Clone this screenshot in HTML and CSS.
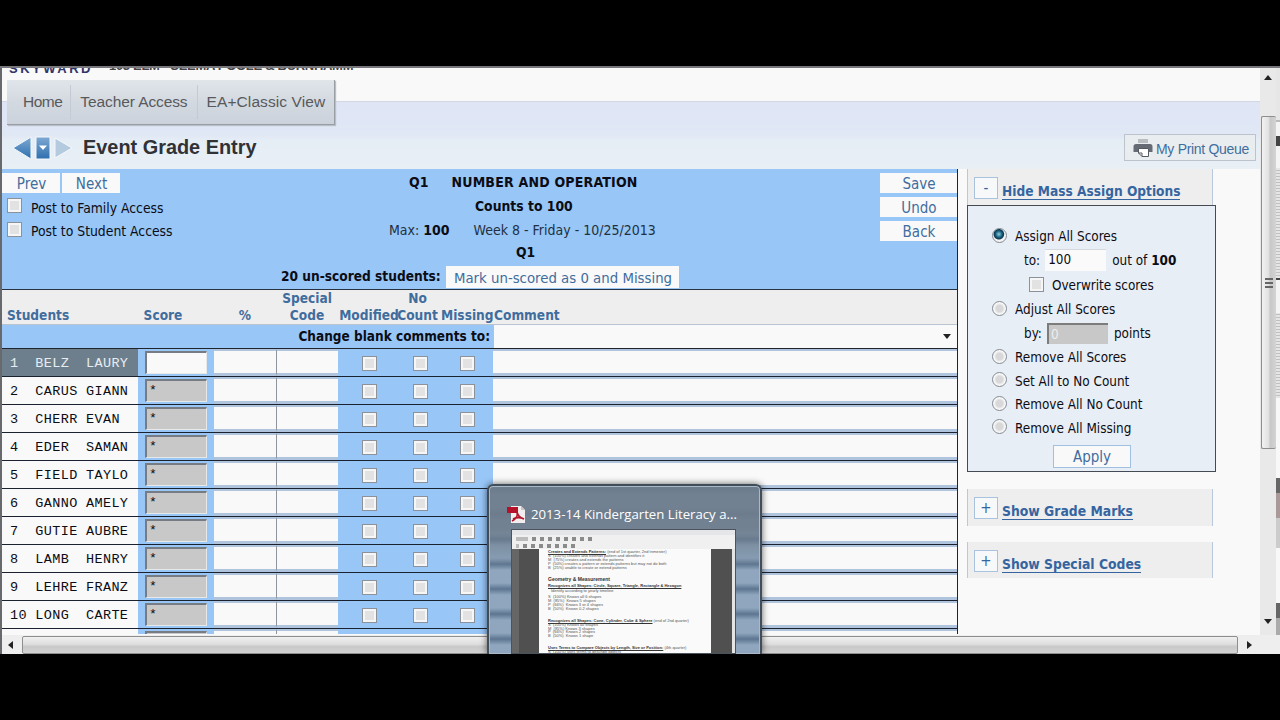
FILE: index.html
```html
<!DOCTYPE html>
<html lang="en">
<head>
    <meta charset="UTF-8">
    <title>Event Grade Entry</title>
    <link rel="stylesheet" href="styles.css">
</head>
<body>
    <div class="screen">
        <div class="app">
            <div class="page">
                <div class="topbar">
                    <span class="logo">SKYWARD</span>
                    <span class="school">103 ELM - SEEMA POOLE &amp; BURNHAMM</span>
                </div>
                <div class="header">
                    <div class="nav">
                        <a>Home</a>
                        <a>Teacher Access</a>
                        <a>EA+Classic View</a>
                    </div>
                    <div class="title-row">
                        <svg class="arrows" width="60" height="24" viewBox="0 0 60 24">
                            <defs>
                                <linearGradient id="blue" x1="0" y1="0" x2="0" y2="1">
                                    <stop offset="0" stop-color="#7fa9d3"/>
                                    <stop offset="1" stop-color="#2d6fae"/>
                                </linearGradient>
                            </defs>
                            <path d="M0 12 18 1V23Z" fill="url(#blue)" stroke="#f4f8fb"/>
                            <rect x="23" y="1" width="14" height="22" fill="url(#blue)" stroke="#f4f8fb"/>
                            <path d="M26 9.500h8l-4 4.500z" fill="#fff"/>
                            <path d="M59 12 42 2V22Z" fill="#b4cade" stroke="#f4f8fb"/>
                        </svg>
                        <h1>Event Grade Entry</h1>
                        <button class="print">
                            <svg width="20" height="20" viewBox="0 0 20 20">
                                <path d="M5 1h10v4H5z" fill="#b9bcc1"/>
                                <path d="M3 6h14q2.500 0 2.500 2.500V14H15v-3H5v3H.5V8.500Q.5 6 3 6z" fill="#666b73"/>
                                <path d="M5.500 10.500h10V18.500H9L5.500 15z" fill="#fff" stroke="#555a62"/>
                                <path d="M5.500 15H9v3.500" fill="none" stroke="#555a62"/>
                            </svg>
                            <span>My Print Queue</span>
                        </button>
                    </div>
                </div>

                <div class="content">
                    <div class="grades">
                        <div class="event">
                            <div class="event-left">
                                <div class="pager"><button>Prev</button><button>Next</button></div>
                                <label><i class="check"></i><span>Post to Family Access</span></label>
                                <label><i class="check"></i><span>Post to Student Access</span></label>
                            </div>
                            <div class="event-info">
                                <div class="line1"><b>Q1</b><b class="subject">NUMBER AND OPERATION</b></div>
                                <div class="line2"><b>Counts to 100</b></div>
                                <div class="line3"><span>Max: <b>100</b></span><span class="date">Week 8 - Friday - 10/25/2013</span></div>
                                <div class="line4"><b>Q1</b></div>
                                <div class="line5"><b>20 un-scored students:</b><button>Mark un-scored as 0 and Missing</button></div>
                            </div>
                            <div class="event-right">
                                <button>Save</button>
                                <button>Undo</button>
                                <button>Back</button>
                            </div>
                        </div>
                        <div class="cols head">
                            <span class="left">Students</span>
                            <span class="h-score">Score</span>
                            <span>%</span>
                            <span>Special<br>Code</span>
                            <span class="h-mod">Modified</span>
                            <span class="h-count">No<br>Count</span>
                            <span class="h-miss">Missing</span>
                            <span class="left">Comment</span>
                        </div>
                        <div class="blank">
                            <b>Change blank comments to:</b>
                            <div class="combo"><i class="tri down"></i></div>
                        </div>
                        <div id="rows"></div>
                    </div>

                    <div class="side">
                        <div class="panel-head open"><i class="toggle">-</i><a>Hide Mass Assign Options</a></div>
                        <div class="options">
                            <div class="opt"><i class="radio on"></i><span>Assign All Scores</span></div>
                            <div class="opt value"><span>to:</span><i class="input">100</i><span>out of <b>100</b></span></div>
                            <div class="opt over"><i class="check"></i><span>Overwrite scores</span></div>
                            <div class="opt"><i class="radio"></i><span>Adjust All Scores</span></div>
                            <div class="opt value"><span>by:</span><i class="input off">0</i><span>points</span></div>
                            <div class="opt gap"><i class="radio"></i><span>Remove All Scores</span></div>
                            <div class="opt"><i class="radio"></i><span>Set All to No Count</span></div>
                            <div class="opt"><i class="radio"></i><span>Remove All No Count</span></div>
                            <div class="opt"><i class="radio"></i><span>Remove All Missing</span></div>
                            <button class="apply">Apply</button>
                        </div>
                        <div class="panel-head marks"><i class="toggle">+</i><a>Show Grade Marks</a></div>
                        <div class="panel-head codes"><i class="toggle">+</i><a>Show Special Codes</a></div>
                    </div>
                </div>
            </div>
            <div class="vscroll">
                <i class="tri up"></i>
                <div class="vthumb"><i></i><i></i><i></i></div>
                <i class="tri down"></i>
            </div>
            <div class="edge"></div>
            <div class="hscroll">
                <i class="tri prev"></i>
                <div class="hthumb"></div>
                <i class="tri next"></i>
            </div>
        </div>

        <div class="preview">
            <div class="preview-title">
                <svg width="19" height="19" viewBox="0 0 19 19">
                    <path d="M4 1h10l4 4v13H4z" fill="#f3eeee"/>
                    <path d="M14 1v4h4z" fill="#c9c4c4"/>
                    <path d="M0 2h11v6H0z" fill="#b3122a"/>
                    <path d="M10 7c1 4 3 6 7 7M10 7c1 4-1 7-5 9M6 14c4-2 7-2 11 0" fill="none" stroke="#b3122a" stroke-width="1.600"/>
                </svg>
                <span>2013-14 Kindergarten Literacy a...</span>
            </div>
            <div class="thumb">
                <div class="bar"></div>
                <div class="bar tools"><i></i><i></i><i></i><i></i><i></i><i></i><i></i><i></i><i></i></div>
                <div class="bar tools second"><i></i><i></i><i></i><i></i><i></i><i></i><i></i><i></i></div>
                <div class="doc">
                    <div class="paper">
                        <p><b><u>Creates and Extends Patterns:</u></b> (end of 1st quarter, 2nd trimester)</p>
                        <p>S &nbsp;(100%) creates and extends pattern and identifies it</p>
                        <p>M &nbsp;(75%) creates and extends the patterns</p>
                        <p>P &nbsp;(50%) creates a pattern or extends patterns but may not do both</p>
                        <p>B &nbsp;(25%) unable to create or extend patterns</p>
                        <h2>Geometry &amp; Measurement</h2>
                        <p><b><u>Recognizes all Shapes: Circle, Square, Triangle, Rectangle &amp; Hexagon</u></b></p>
                        <p class="sp">Identify according to yearly timeline</p>
                        <p>S &nbsp;(100%) Knows all 6 shapes</p>
                        <p>M &nbsp;(85%) &nbsp;Knows 5 shapes</p>
                        <p>P &nbsp;(66%) &nbsp;Knows 3 or 4 shapes</p>
                        <p>B &nbsp;(50%) &nbsp;Knows 0-2 shapes</p>
                        <p class="far"><b><u>Recognizes all Shapes: Cone, Cylinder, Cube &amp; Sphere</u></b> (end of 2nd quarter)</p>
                        <p>S &nbsp;(100%) Knows all shapes</p>
                        <p>M &nbsp;(85%) Knows 3 shapes</p>
                        <p>P &nbsp;(66%) &nbsp;Knows 2 shapes</p>
                        <p>B &nbsp;(50%) &nbsp;Knows 1 shape</p>
                        <p class="far"><b><u>Uses Terms to Compare Objects by Length, Size or Position:</u></b> (4th quarter)</p>
                        <p>S &nbsp;(100%) uses terms to describe objects</p>
                    </div>
                </div>
            </div>
        </div>
    </div>

    <script>
        const students = [
            ['BELZ', 'LAURY'], ['CARUS', 'GIANN'], ['CHERR', 'EVAN'], ['EDER', 'SAMAN'],
            ['FIELD', 'TAYLO'], ['GANNO', 'AMELY'], ['GUTIE', 'AUBRE'], ['LAMB', 'HENRY'],
            ['LEHRE', 'FRANZ'], ['LONG', 'CARTE'], ['', '']
        ];

        document.getElementById('rows').innerHTML = students.map(([last, first], i) => `
            <div class="cols row${i === 0 ? ' active' : ''}">
                <span class="name">${last ? String(i + 1).padEnd(3) + last.padEnd(6) + first : ''}</span>
                <span class="score">${i === 0 || !last ? '' : '*'}</span>
                <span class="cell"></span>
                <span class="cell code"></span>
                <span class="tick"><i class="check"></i></span>
                <span class="tick"><i class="check"></i></span>
                <span class="tick"><i class="check"></i></span>
                <span class="cell comment"></span>
            </div>`).join('');
    </script>
</body>
</html>
```
FILE: styles.css
```css
:root {
    --blue: #97c6f7;
    --link: #3f6d9e;
    --paper: #f9f9f9;
    --grey: #eeeeee;
}

* {
    box-sizing: border-box;
}

body {
    margin: 0;
    background: #000;
    font-family: "DejaVu Sans Condensed", "DejaVu Sans", sans-serif;
    font-stretch: condensed;
    font-size: 13.800px;
    color: #0c0c14;
}

i {
    font-style: normal;
}

button {
    font: inherit;
    font-size: 15px;
    color: var(--link);
    background: var(--paper);
    border: 0;
    padding: 0;
    white-space: nowrap;
}

.screen {
    position: relative;
    width: 1280px;
    height: 720px;
    padding-top: 66px;
    overflow: hidden;
}

.app {
    display: grid;
    grid-template-columns: 1260px 16px 4px;
    grid-template-rows: 567px 19px;
    height: 588px;
    border-top: 2px solid #77777b;
    background: var(--paper);
}

.page {
    border-left: 2px solid #68696d;
    overflow: hidden;
}

/* header */
.topbar {
    height: 33px;
    display: flex;
    overflow: hidden;
    white-space: nowrap;
}

.logo {
    margin: -7px 0 0 7px;
    height: 13px;
    width: 100px;
    font: bold 13px/15px "Liberation Sans", sans-serif;
    letter-spacing: 2.500px;
    color: #303468;
}

.school {
    margin-top: -9px;
    height: 14px;
    font: bold 13px/14px "Liberation Sans", sans-serif;
    letter-spacing: -.3px;
    color: #444;
}

.header {
    height: 68px;
    background: linear-gradient(#dfe5f5 0, #e0e7f5 32px, #e6eef5 40px, #e8eff5 100%);
    border-top: 1px solid #d3d7e4;
}

.nav {
    display: flex;
    align-items: center;
    position: relative;
    width: 328px;
    height: 45px;
    margin: -22px 0 0 5px;
    padding-left: 7px;
    background: linear-gradient(#e0e5ea, #d3d9e0 50%, #cbd2dc);
    border-right: 1px solid #999ea5;
    border-bottom: 1px solid #999ea5;
    box-shadow: 1px 1px 1px #b9bec8;
    font: 15.500px "Liberation Sans", sans-serif;
    letter-spacing: -.1px;
    color: #58595d;
    white-space: nowrap;
}

.nav a {
    padding: 8px 9px;
    border-right: 1px solid #c3cad3;
}

.nav a:first-child {
    padding-right: 8px;
    letter-spacing: -.5px;
}

.nav a:last-child {
    border: 0;
    letter-spacing: .1px;
}

.title-row {
    display: flex;
    align-items: center;
    height: 45px;
    padding: 0 4px 0 11px;
}

.arrows {
    margin-right: 10px;
}

h1 {
    margin: 0;
    font: bold 19.900px "Liberation Sans", sans-serif;
    color: #303236;
}

.print {
    display: flex;
    align-items: center;
    gap: 3px;
    width: 132px;
    height: 27px;
    margin-left: auto;
    padding-left: 8px;
    background: #eaedf0;
    border: 1px solid #bcc3cc;
    font: 14px "Liberation Sans", sans-serif;
    letter-spacing: -.3px;
}

.print span {
    padding-top: 2px;
}

.content {
    display: flex;
}

/* event summary */
.grades {
    width: 956px;
    border-right: 1px solid #20242c;
}

.event {
    display: grid;
    grid-template-columns: 272px 413px 1fr;
    height: 121px;
    background: var(--blue);
    border-bottom: 1px solid #26323f;
}

.event button {
    padding: 2px 0 0 1px;
    line-height: 18px;
}

.pager {
    display: flex;
    gap: 2px;
    padding-top: 4px;
    height: 27px;
}

.pager button {
    width: 58px;
    height: 20px;
}

.event-left label {
    display: flex;
    align-items: center;
    gap: 9px;
    height: 23.500px;
    padding-left: 5px;
}

.check {
    flex: none;
    width: 15px;
    height: 15px;
    background: #e2e2e2;
    border: 1px solid #8b9299;
    box-shadow: inset 0 0 0 2px #f6f6f6;
}

.event-left .check {
    margin-top: -4px;
}

.event-info {
    white-space: nowrap;
}

.event-info div {
    display: flex;
    align-items: center;
    height: 24px;
}

.event-info .line1 {
    height: 25px;
    padding-left: 135px;
    font-size: 14px;
}

.subject {
    margin-left: 23px;
    letter-spacing: .2px;
}

.event-info .line2 {
    height: 23px;
    padding-left: 201px;
}

.event-info .line3 {
    height: 25px;
    padding-left: 115px;
    font-size: 14px;
    color: #22303f;
}

.line3 b {
    color: #0c0c14;
}

.date {
    margin-left: 24px;
}

.event-info .line4 {
    height: 20px;
    padding-left: 242px;
}

.event-info .line5 {
    height: 27px;
    padding-left: 7px;
}

.line5 b {
    font-size: 13.600px;
}

.line5 button {
    width: 233px;
    height: 22px;
    margin-left: auto;
    margin-right: 8px;
    margin-top: 3px;
    font-size: 14.800px;
}

.event-right {
    display: flex;
    flex-direction: column;
    align-items: flex-end;
    gap: 4px;
    padding-top: 4px;
}

.event-right button {
    width: 77px;
    height: 20px;
}

/* grade table */
.cols {
    display: grid;
    grid-template-columns: 136px 76px 62px 62px 63px 45px 47px 1fr;
}

.head {
    height: 35px;
    padding-bottom: 1px;
    align-items: end;
    background: var(--grey);
    border-bottom: 1px solid #b8c4d0;
    color: var(--link);
    font-weight: bold;
    font-size: 13.600px;
    line-height: 17px;
    text-align: center;
    white-space: nowrap;
}

.head .left {
    text-align: left;
    padding-left: 1px;
}

.head .left:first-child {
    padding-left: 5px;
}

.h-score {
    margin-right: 26px;
}

.h-mod {
    margin-left: -1px;
}

.h-count {
    margin: 0 6px 0 -6px;
}

.h-miss {
    margin: 0 2px 0 -5px;
}

.blank {
    display: flex;
    height: 24px;
    background: var(--blue);
    border-bottom: 1px solid #20242c;
}

.blank b {
    width: 488px;
    font-size: 13.500px;
    text-align: right;
    line-height: 23px;
}

.combo {
    flex: 1;
    display: flex;
    align-items: center;
    justify-content: flex-end;
    margin-left: 4px;
    padding-right: 6px;
    background: var(--paper);
}

#rows {
    height: 285px;
    overflow: hidden;
}

.row {
    grid-template-rows: 100%;
    height: 28.060px;
    background: var(--blue);
    border-bottom: 1px solid #1a2230;
}

.name {
    padding-left: 8px;
    background: var(--paper);
    font: 13.500px/29px "Liberation Mono", monospace;
    letter-spacing: .35px;
    white-space: pre;
    overflow: hidden;
}

.active .name {
    background: #6d7f8d;
    color: #e8edf2;
}

.score {
    width: 62px;
    height: 23px;
    margin: 2px 0 0 7px;
    padding-left: 2px;
    background: #c8c8c8;
    border: 1px solid #e8e8e8;
    border-top: 2px solid #777c84;
    border-left: 2px solid #777c84;
    font: 13px/20px "Liberation Mono", monospace;
}

.active .score {
    background: var(--paper);
}

.cell {
    background: var(--paper);
    border: solid #b0c4dd;
    border-width: 2px 0 3px;
}

.code {
    border-left: 1px solid #8f959c;
}

.tick {
    padding: 7px 0 0 24px;
}

.tick + .tick {
    padding-left: 12px;
}

.tick + .tick + .tick {
    padding-left: 14px;
}

.tick .check {
    display: block;
}

/* sidebar */
.side {
    width: 249px;
    margin-left: 9px;
}

.panel-head {
    display: flex;
    align-items: flex-start;
    gap: 5px;
    width: 246px;
    padding: 8px 0 0 6px;
    background: var(--grey);
    border: solid #b9c8da;
    border-width: 0 1px;
    color: #3565a0;
    font-weight: bold;
    font-size: 13.800px;
    white-space: nowrap;
}

.panel-head a {
    margin: 6px 0 0 -1px;
    line-height: 16px;
    border-bottom: 1px solid #3565a0;
}

.toggle {
    width: 24px;
    height: 22px;
    background: #f7f8fa;
    border: 1px solid #a9c3de;
    font-size: 15px;
    font-weight: normal;
    line-height: 20px;
    text-align: center;
}

.open {
    height: 36px;
    font-size: 13.600px;
}

.options {
    height: 267px;
    padding: 19px 0 0 24px;
    background: #e8eef5;
    border: 1px solid #454b54;
    font-size: 13.400px;
}

.opt {
    display: flex;
    align-items: center;
    height: 23.500px;
    white-space: nowrap;
}

.radio {
    width: 15px;
    height: 15px;
    margin: -3px 8px 0 0;
    border-radius: 50%;
    border: 1px solid #858b92;
    background: radial-gradient(#d8d8d8 35%, #f8f8f8 60%);
}

.radio.on {
    background: radial-gradient(circle at 45% 40%, #8fd0e0 0, #17607e 30%, #0d3850 45%, #f4f4f4 55%);
}

.value {
    padding-left: 32px;
}

.input {
    width: 61px;
    height: 22px;
    margin: 0 6px 0 5px;
    padding-left: 3px;
    background: #fafafa;
    border-top: 1px solid #d5d9dd;
    line-height: 20px;
}

.input.off {
    height: 21px;
    padding-left: 2px;
    background: #c8c8c8;
    border-top: 2px solid #7c7c7c;
    border-left: 2px solid #7c7c7c;
    color: #eee;
}

.over {
    height: 26px;
    padding-left: 37px;
    gap: 8px;
}

.over .check {
    margin-top: -2px;
}

.opt.gap {
    margin-top: 1px;
}

.apply {
    display: block;
    width: 78px;
    height: 23px;
    margin: 5px 0 0 61px;
    border: 1px solid #9fc0e0;
}

.marks {
    height: 37px;
    margin-top: 17px;
}

.codes {
    height: 36px;
    margin-top: 16px;
}

/* scrollbars */
.tri {
    border: 4px solid transparent;
}

.down {
    border-top: 5px solid #222;
    border-bottom: 0;
}

.up {
    border-bottom: 5px solid #222;
    border-top: 0;
}

.prev {
    border-right: 5px solid #222;
    border-left: 0;
}

.next {
    border-left: 5px solid #222;
    border-right: 0;
}

.vscroll {
    display: flex;
    flex-direction: column;
    align-items: center;
    background: #e9e9e9;
    padding: 7px 0 11px;
}

.vthumb {
    display: flex;
    flex-direction: column;
    align-items: center;
    justify-content: center;
    gap: 2px;
    width: 15px;
    height: 333px;
    margin: 36px 0 auto;
    background: linear-gradient(90deg, #f2f2f2, #e2e2e2 45%, #c8c8c8 60%, #d4d4d4);
    border: 1px solid #8e8e8e;
    border-right: 0;
    border-radius: 2px;
}

.vthumb i {
    width: 8px;
    height: 2px;
    background: #666;
}

.edge {
    background:
        linear-gradient(#e6e6e6 0 52px, #bbb 52px 54px, #f4f4f4 54px 68px, #444 68px 78px, #f4f4f4 78px 100px, transparent 100px 210px, #444 210px 212px, #f4f4f4 212px 245px, transparent 245px 330px, #f8f8f8 330px 410px, #666 410px 425px, #a99 425px 450px, #ccc 450px 480px, #f8f8f8 480px 535px, #666 535px 550px, #aaa 550px),
        repeating-linear-gradient(#c4bcc6 0 1px, #e4e6e2 1px 3px);
}

.hscroll {
    grid-column: 1 / 4;
    display: flex;
    align-items: center;
    background: #eeeeee;
    border-left: 2px solid #68696d;
    padding-left: 6px;
}

.hthumb {
    width: 1216px;
    height: 18px;
    margin: 0 9px;
    background: linear-gradient(#f0f0f0, #dedede 45%, #c9c9c9 60%, #d2d2d2);
    border: 1px solid #8e8e8e;
    border-radius: 2px;
}

/* taskbar window preview, floats over the table */
.preview {
    position: absolute;
    left: 487px;
    top: 484px;
    width: 275px;
    height: 170px;
    padding: 17px 24px 0;
    overflow: hidden;
    border: 2px solid #414d59;
    border-bottom: 0;
    border-radius: 6px 6px 0 0;
    box-shadow: inset 0 0 0 1px #a9b9c8, 0 0 7px rgba(0, 0, 0, .6);
    background:
        linear-gradient(rgba(110, 125, 140, .9) 25%, transparent 50%),
        repeating-linear-gradient(#5d7590 3px, #8fa6be 9px 22px, #5d7590 28px);
}

.preview-title {
    display: flex;
    align-items: center;
    gap: 5px;
    width: 240px;
    height: 22px;
    margin-left: -6px;
    font: 13.200px "Open Sans", sans-serif;
    color: #fff;
    white-space: nowrap;
}

.preview-title span {
    margin-top: -1px;
}

.thumb {
    width: 225px;
    height: 125px;
    margin: 4px 0 0 -2px;
    background: #f1f1f1;
    border: 1px solid #4b535c;
    overflow: hidden;
}

.bar {
    height: 5px;
    background: #e4e6e9;
}

.tools {
    display: flex;
    align-items: center;
    gap: 4px;
    height: 7px;
    padding-left: 4px;
    background: #f0f0f0;
}

.tools i {
    width: 4px;
    height: 4px;
    background: #8b8b8b;
}

.tools i:first-child {
    width: 12px;
    background: #bbb;
}

.second i:first-child {
    width: 3px;
}

.doc {
    display: flex;
    padding-left: 27px;
    background: linear-gradient(90deg, #666 0 7px, #505050 7px 220px, #e4e4e4 220px);
}

.paper {
    width: 172px;
    height: 110px;
    padding: 1px 0 0 9px;
    background: #fafafa;
    font: 4px/5px "Liberation Sans", sans-serif;
    color: #555;
    white-space: nowrap;
    overflow: hidden;
}

.paper p {
    margin: 0;
    height: 3.900px;
    line-height: 4px;
}

.paper h2 {
    margin: 8px 0 2px;
    font: bold 5px/5px "Liberation Sans", sans-serif;
    color: #333;
}

.paper b {
    color: #333;
}

.paper .sp {
    margin: 1px 0 2px 3px;
}

.paper .far {
    margin-top: 8px;
}
```
